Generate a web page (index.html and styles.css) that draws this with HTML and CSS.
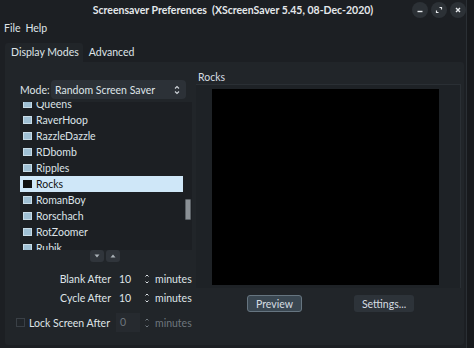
FILE: index.html
```html
<!DOCTYPE html>
<html>
<head>
<meta charset="utf-8">
<link rel="stylesheet" href="styles.css">
</head>
<body>
<div class="screen">
  <div class="window">
    <div class="titlebar">
      <div></div>
      <div class="title">Screensaver Preferences&nbsp; (XScreenSaver 5.45, 08-Dec-2020)</div>
      <div class="controls">
        <span class="ctl"><svg width="8" height="8" viewBox="0 0 8 8"><path d="M1.5 5.5h5" stroke="#e6e9ec" stroke-width="1.4"/></svg></span>
        <span class="ctl"><svg width="8" height="8" viewBox="0 0 8 8"><path d="M4.5 1.5h2v2M3.5 6.5h-2v-2" stroke="#e6e9ec" stroke-width="1.2" fill="none"/></svg></span>
        <span class="ctl"><svg width="8" height="8" viewBox="0 0 8 8"><path d="M2 2l4 4M6 2l-4 4" stroke="#e6e9ec" stroke-width="1.4"/></svg></span>
      </div>
    </div>
    <div class="menubar"><span>File</span><span>Help</span></div>
    <div class="tabs"><span class="tab active">Display Modes</span><span class="tab">Advanced</span></div>
    <div class="notebook">
      <div class="left">
        <div class="moderow">
          <span class="modelabel">Mode:</span>
          <div class="combo"><span>Random Screen Saver</span>
            <svg width="6" height="10" viewBox="0 0 6 10"><path d="M1 3.5L3 1.5L5 3.5M1 6.5L3 8.5L5 6.5" stroke="#cfd5da" stroke-width="1.1" fill="none"/></svg>
          </div>
        </div>
        <div class="list">
          <div class="listinner">
            <div class="row"><i class="ic"></i>Queens</div>
            <div class="row"><i class="ic"></i>RaverHoop</div>
            <div class="row"><i class="ic"></i>RazzleDazzle</div>
            <div class="row"><i class="ic"></i>RDbomb</div>
            <div class="row"><i class="ic"></i>Ripples</div>
            <div class="row sel"><i class="ic"></i>Rocks</div>
            <div class="row"><i class="ic"></i>RomanBoy</div>
            <div class="row"><i class="ic"></i>Rorschach</div>
            <div class="row"><i class="ic"></i>RotZoomer</div>
            <div class="row"><i class="ic"></i>Rubik</div>
          </div>
          <div class="scroll"><div class="thumb"></div></div>
        </div>
        <div class="arrows">
          <span class="abtn"><svg width="6" height="4" viewBox="0 0 6 4"><path d="M0.5 0.5h5L3 3.5z" fill="#aab2b8"/></svg></span>
          <span class="abtn"><svg width="6" height="4" viewBox="0 0 6 4"><path d="M0.5 3.5h5L3 0.5z" fill="#aab2b8"/></svg></span>
        </div>
        <div class="times">
          <span class="tlabel">Blank After</span>
          <span class="tval">10</span>
          <span class="spin"><svg width="4" height="12" viewBox="0 0 4 12"><path d="M0.5 3.5L2 2L3.5 3.5M0.5 8.5L2 10L3.5 8.5" stroke="#dfe4e8" stroke-width="1" fill="none"/></svg></span>
          <span class="tunit">minutes</span>
          <span class="tlabel">Cycle After</span>
          <span class="tval">10</span>
          <span class="spin"><svg width="4" height="12" viewBox="0 0 4 12"><path d="M0.5 3.5L2 2L3.5 3.5M0.5 8.5L2 10L3.5 8.5" stroke="#dfe4e8" stroke-width="1" fill="none"/></svg></span>
          <span class="tunit">minutes</span>
        </div>
        <div class="lockrow">
          <span class="locklabel"><i class="check"></i>Lock Screen After</span>
          <span class="lockval">0</span>
          <span class="spin"><svg width="4" height="12" viewBox="0 0 4 12"><path d="M0.5 3.5L2 2L3.5 3.5M0.5 8.5L2 10L3.5 8.5" stroke="#6f777e" stroke-width="1" fill="none"/></svg></span>
          <span class="tunit dim">minutes</span>
        </div>
      </div>
      <div class="right">
        <div class="plabel">Rocks</div>
        <div class="frame"><div class="preview"></div></div>
        <div class="buttons">
          <span class="btn primary">Preview</span>
          <span class="btn">Settings...</span>
        </div>
      </div>
    </div>
  </div>
  <div class="strip"></div>
</div>
</body>
</html>
```
FILE: styles.css
```css
html, body {
  margin: 0;
  padding: 0;
  background: #1b1e22;
}
body {
  font-family: "Lato", "Inter", sans-serif;
  font-size: 10.5px;
  color: #dfe4e8;
  white-space: nowrap;
}
.screen {
  width: 474px;
  height: 348px;
  display: flex;
  overflow: hidden;
}
.window {
  width: 466px;
  display: flex;
  flex-direction: column;
  background: #1c1f23;
}
.strip {
  flex: 1;
  background: #17191c;
  border-left: 1px solid #2a2f34;
}
.titlebar {
  height: 19px;
  display: grid;
  grid-template-columns: 1fr auto 1fr;
  align-items: center;
}
.title {
  font-weight: 700;
  font-size: 10.5px;
  color: #e4e8eb;
}
.controls {
  justify-self: end;
  display: flex;
  gap: 3px;
  padding-right: 0;
}
.ctl {
  width: 16px;
  height: 16px;
  border-radius: 50%;
  background: #2c3136;
  display: flex;
  align-items: center;
  justify-content: center;
}
.menubar {
  height: 17px;
  display: flex;
  align-items: center;
  gap: 5px;
  padding-left: 4px;
}
.tabs {
  margin-top: 7px;
  height: 19px;
  display: flex;
  align-items: center;
  padding-left: 5px;
}
.tab {
  height: 19px;
  line-height: 19px;
  padding: 0 4px 0 6px;
}
.tab.active {
  background: #212529;
  border-radius: 3px 3px 0 0;
}
.notebook {
  flex: 1;
  margin: 0 2px 3px 5px;
  background: #212529;
  border-radius: 0 3px 3px 3px;
  display: flex;
}
.left {
  width: 187px;
  display: flex;
  flex-direction: column;
}
.moderow {
  margin-top: 18px;
  display: flex;
  align-items: center;
  height: 19px;
  padding-left: 15px;
}
.modelabel {
  width: 31px;
}
.combo {
  width: 135px;
  height: 19px;
  box-sizing: border-box;
  background: #2c3137;
  border-radius: 4px;
  display: flex;
  align-items: center;
  justify-content: space-between;
  padding: 0 6px 0 4px;
}
.list {
  margin-top: 3px;
  margin-left: 15px;
  height: 148px;
  display: flex;
  background: #1c1f23;
}
.listinner {
  width: 163px;
  overflow: hidden;
}
.row {
  height: 16px;
  display: flex;
  align-items: center;
  padding-left: 3px;
  color: #dde3e8;
}
.row:first-child {
  margin-top: -6px;
}
.row.sel {
  background: #cfe7f8;
  color: #111;
}
.ic {
  width: 7px;
  height: 6px;
  background: #9fbfd3;
  border: 1px solid #c8dbe6;
  margin-right: 4px;
  flex: none;
}
.row.sel .ic {
  background: #111;
  border-color: #111;
}
.scroll {
  width: 7px;
  padding-left: 2px;
}
.thumb {
  margin-top: 97px;
  width: 4px;
  height: 19px;
  background: #8b9196;
  border: 1px solid #5b6166;
  border-radius: 1px;
}
.arrows {
  display: flex;
  gap: 2px;
  padding-left: 85px;
  height: 12px;
}
.abtn {
  width: 14px;
  height: 12px;
  background: #30353b;
  border-radius: 3px;
  display: flex;
  align-items: center;
  justify-content: center;
}
.times {
  margin-top: 7px;
  display: grid;
  grid-template-columns: 100px 29px 6px auto;
  grid-auto-rows: 19px;
  align-items: center;
  padding-left: 11px;
}
.tlabel {
  text-align: right;
  padding-right: 5px;
}
.tval {
  padding-left: 3px;
}
.spin {
  display: flex;
  align-items: center;
}
.tunit {
  padding-left: 4px;
}
.lockrow {
  margin-top: 6px;
  height: 19px;
  display: grid;
  grid-template-columns: 100px 24px 15px auto;
  align-items: center;
  padding-left: 11px;
}
.locklabel {
  display: flex;
  align-items: center;
}
.check {
  width: 7px;
  height: 7px;
  border: 1px solid #3a4046;
  margin-right: 4px;
}
.lockval {
  height: 19px;
  line-height: 19px;
  padding-left: 4px;
  background: #262a2f;
  color: #6e767d;
}
.lockrow .spin {
  padding-left: 5px;
}
.tunit.dim {
  color: #6e767d;
  padding-left: 0;
}
.right {
  flex: 1;
  display: flex;
  flex-direction: column;
  padding-left: 4px;
  padding-right: 3px;
}
.plabel {
  margin-top: 9px;
  height: 13px;
  padding-left: 2px;
  color: #d6dde2;
}
.frame {
  height: 204px;
  border-top: 1px solid #2a2f34;
  border-right: 1px solid #2a2f34;
  padding: 4px 15px 0 16px;
  background: #1e2226;
  box-sizing: border-box;
}
.preview {
  height: 196px;
  width: 227px;
  background: #000;
}
.buttons {
  margin-top: 7px;
  display: flex;
  gap: 52px;
  padding-left: 51px;
}
.btn {
  height: 17px;
  box-sizing: border-box;
  padding: 0 8px;
  display: flex;
  align-items: center;
  background: #2d3339;
  border-radius: 3px;
  color: #d6dde2;
}
.btn.primary {
  background: #3a4751;
  border: 1px solid #667580;
  padding: 0 8px;
}
```
